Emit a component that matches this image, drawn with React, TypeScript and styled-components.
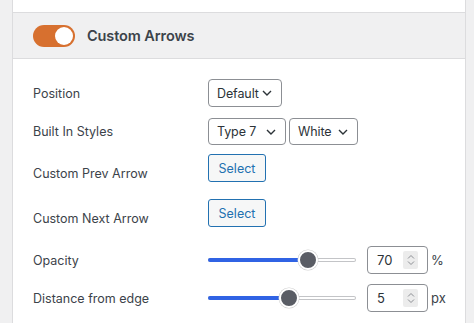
import React from "react"
import styled, {createGlobalStyle} from "styled-components"

const GlobalStyle = createGlobalStyle`
  html, body {
    margin: 0;
    padding: 0;
    background: #f0f0f1;
    font-family: Inter, "Liberation Sans", sans-serif;
  }
`

const Panel = styled.div`
  margin-left: 12px;
  width: 452px;
  min-height: 323px;
  background: #fff;
  border-left: 1px solid #dcdcde;
  border-right: 1px solid #dcdcde;
`

const TopGap = styled.div`
  height: 12px;
`

const Header = styled.div`
  display: flex;
  align-items: center;
  gap: 12px;
  height: 45px;
  padding-left: 20px;
  background: #f0f0f1;
  border-top: 1px solid #dcdcde;
  border-bottom: 1px solid #dcdcde;
`

const Toggle = styled.div`
  position: relative;
  width: 42px;
  height: 22px;
  border-radius: 11px;
  background: #d7702f;
`

const Knob = styled.div`
  position: absolute;
  top: 2px;
  right: 2px;
  width: 18px;
  height: 18px;
  border-radius: 50%;
  background: #fff;
`

const Title = styled.div`
  font-size: 14.5px;
  font-weight: 600;
  color: #3c434a;
  letter-spacing: -0.1px;
`

const Body = styled.div`
  padding: 20px 20px 0 20px;
`

const Row = styled.div<{$top: number; $h: number}>`
  display: grid;
  grid-template-columns: 175px 1fr;
  align-items: center;
  margin-top: ${(p) => p.$top}px;
  height: ${(p) => p.$h}px;
`

const Label = styled.div<{$shift?: number}>`
  font-size: 12.5px;
  color: #3c434a;
  padding-top: ${(p) => (p.$shift || 0) * 2}px;
`

const Controls = styled.div`
  display: flex;
  align-items: center;
  gap: 3px;
  height: 100%;
`

const SelectBox = styled.div<{$w: number}>`
  box-sizing: border-box;
  display: flex;
  align-items: center;
  justify-content: space-between;
  width: ${(p) => p.$w}px;
  height: 100%;
  padding: 0 9px 0 8px;
  border: 1px solid #8c8f94;
  border-radius: 4px;
  font-size: 12.5px;
  letter-spacing: -0.1px;
  color: #2c3338;
`

const Button = styled.div`
  box-sizing: border-box;
  display: flex;
  align-items: center;
  justify-content: center;
  width: 58px;
  height: 100%;
  border: 1px solid #2271b1;
  border-radius: 3px;
  background: #f6f7f7;
  color: #2271b1;
  font-size: 12.5px;
`

const Track = styled.div`
  position: relative;
  width: 148px;
  height: 4px;
  border-radius: 2px;
  background: #fff;
  box-shadow: inset 0 0 0 1px #c3c4c7;
`

const Fill = styled.div`
  position: absolute;
  left: 0;
  top: 0;
  height: 4px;
  border-radius: 2px;
  background: #3063e4;
`

const Thumb = styled.div`
  position: absolute;
  top: -8px;
  width: 16px;
  height: 16px;
  margin-left: -10px;
  border-radius: 50%;
  background: #5a5d65;
  border: 2px solid #fff;
  box-shadow: 0 0 0 0.5px #d0d0d0;
`

const SliderWrap = styled.div`
  display: flex;
  align-items: center;
  width: 156px;
`

const NumberBox = styled.div`
  box-sizing: border-box;
  display: flex;
  align-items: center;
  justify-content: space-between;
  width: 61px;
  height: 100%;
  padding: 0 9px 0 9px;
  border: 1px solid #8c8f94;
  border-radius: 4px;
  font-size: 13px;
  color: #2c3338;
`

const Spinner = styled.div`
  display: flex;
  align-items: center;
  justify-content: center;
  width: 15px;
  height: 18px;
  background: #ececec;
  border-radius: 2px;
`

const Unit = styled.div`
  margin-left: 0;
  font-size: 13px;
  color: #3c434a;
`

const Chevron = () => (
  <svg width="10" height="6" viewBox="0 0 10 6">
    <path d="M1 1l4 4 4-4" fill="none" stroke="#2c3338" strokeWidth="1.4" />
  </svg>
)

const UpDown = () => (
  <svg width="8" height="12" viewBox="0 0 8 12">
    <path d="M1 4.5l3-3 3 3M1 7.5l3 3 3-3" fill="none" stroke="#8c8f94" strokeWidth="1" />
  </svg>
)

const Select = ({w, text}: {w: number; text: string}) => (
  <SelectBox $w={w}>
    <span>{text}</span>
    <Chevron />
  </SelectBox>
)

const Slider = ({frac}: {frac: number}) => {
  const center = 10 + frac * 128
  return (
    <SliderWrap>
      <Track>
        <Fill style={{width: center}} />
        <Thumb style={{left: center}} />
      </Track>
    </SliderWrap>
  )
}

const NumberField = ({value, unit}: {value: string; unit: string}) => (
  <>
    <NumberBox>
      <span>{value}</span>
      <Spinner>
        <UpDown />
      </Spinner>
    </NumberBox>
    <Unit>{unit}</Unit>
  </>
)

export default function App() {
  return (
    <>
      <GlobalStyle />
      <Panel>
        <TopGap />
        <Header>
          <Toggle>
            <Knob />
          </Toggle>
          <Title>Custom Arrows</Title>
        </Header>
        <Body>
          <Row $top={0} $h={28}>
            <Label>Position</Label>
            <Controls>
              <Select w={74} text="Default" />
            </Controls>
          </Row>
          <Row $top={11} $h={27}>
            <Label>Built In Styles</Label>
            <Controls>
              <Select w={78} text="Type 7" />
              <Select w={69} text="White" />
            </Controls>
          </Row>
          <Row $top={9} $h={28}>
            <Label $shift={5}>Custom Prev Arrow</Label>
            <Controls>
              <Button>Select</Button>
            </Controls>
          </Row>
          <Row $top={17} $h={28}>
            <Label $shift={5}>Custom Next Arrow</Label>
            <Controls>
              <Button>Select</Button>
            </Controls>
          </Row>
          <Row $top={19} $h={28}>
            <Label>Opacity</Label>
            <Controls>
              <Slider frac={0.7} />
              <NumberField value="70" unit="%" />
            </Controls>
          </Row>
          <Row $top={10} $h={28}>
            <Label>Distance from edge</Label>
            <Controls>
              <Slider frac={0.555} />
              <NumberField value="5" unit="px" />
            </Controls>
          </Row>
        </Body>
      </Panel>
    </>
  )
}
